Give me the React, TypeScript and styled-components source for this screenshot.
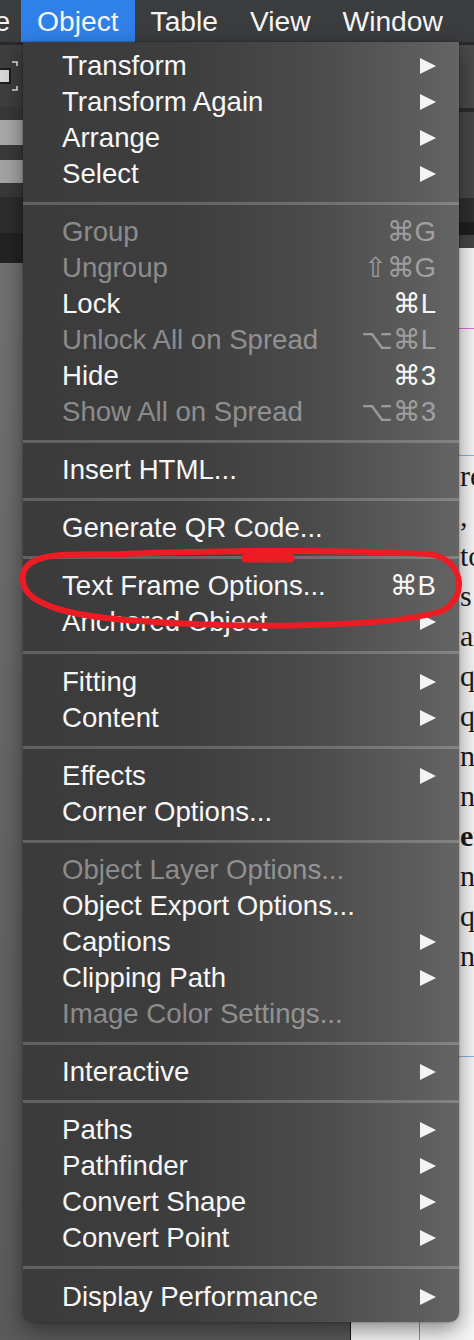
import styled, { createGlobalStyle } from 'styled-components';

type Item = {
  label: string;
  shortcut?: string;
  submenu?: boolean;
  disabled?: boolean;
};

type Section = { items: Item[]; gap?: number };

const sections: Section[] = [
  {
    items: [
      { label: 'Transform', submenu: true },
      { label: 'Transform Again', submenu: true },
      { label: 'Arrange', submenu: true },
      { label: 'Select', submenu: true },
    ],
  },
  {
    gap: 22,
    items: [
      { label: 'Group', shortcut: '⌘G', disabled: true },
      { label: 'Ungroup', shortcut: '⇧⌘G', disabled: true },
      { label: 'Lock', shortcut: '⌘L' },
      { label: 'Unlock All on Spread', shortcut: '⌥⌘L', disabled: true },
      { label: 'Hide', shortcut: '⌘3' },
      { label: 'Show All on Spread', shortcut: '⌥⌘3', disabled: true },
    ],
  },
  { gap: 22, items: [{ label: 'Insert HTML...' }] },
  { gap: 22, items: [{ label: 'Generate QR Code...' }] },
  {
    gap: 22,
    items: [
      { label: 'Text Frame Options...', shortcut: '⌘B' },
      { label: 'Anchored Object', submenu: true },
    ],
  },
  {
    gap: 24,
    items: [
      { label: 'Fitting', submenu: true },
      { label: 'Content', submenu: true },
    ],
  },
  {
    gap: 22,
    items: [
      { label: 'Effects', submenu: true },
      { label: 'Corner Options...' },
    ],
  },
  {
    gap: 22,
    items: [
      { label: 'Object Layer Options...', disabled: true },
      { label: 'Object Export Options...' },
      { label: 'Captions', submenu: true },
      { label: 'Clipping Path', submenu: true },
      { label: 'Image Color Settings...', disabled: true },
    ],
  },
  { gap: 22, items: [{ label: 'Interactive', submenu: true }] },
  {
    gap: 22,
    items: [
      { label: 'Paths', submenu: true },
      { label: 'Pathfinder', submenu: true },
      { label: 'Convert Shape', submenu: true },
      { label: 'Convert Point', submenu: true },
    ],
  },
  { gap: 23, items: [{ label: 'Display Performance', submenu: true }] },
];

const titles = ['Object', 'Table', 'View', 'Window'];

// bars of the control panel peeking out at each side of the menu
const leftBars = [
  { h: 3, c: '#2a2a2a' },
  { h: 62, c: '#3e3e3e', icon: true },
  { h: 13, c: '#383838' },
  { h: 25, c: '#a8a8a8' },
  { h: 15, c: '#3a3a3a' },
  { h: 23, c: '#a4a4a4' },
  { h: 14, c: '#393939' },
  { h: 36, c: '#2d2d2d' },
  { h: 15, c: '#232323' },
];

const rightBars = [
  { h: 3, c: '#2a2a2a' },
  { h: 63, c: '#4a4a4a' },
  { h: 4, c: '#2c2c2c' },
  { h: 86, c: '#484848' },
  { h: 24, c: '#2f2f2f' },
  { h: 13, c: '#1f1f1f' },
  { h: 13, c: '#454545' },
];

const pageLines = ['rest', ', a', 'to', 's m', 'ar', 'qu', 'q', 'ne', 'n a', 'et', 'ns', 'q', 'ns'];

const App = () => {
  return (
    <Screen>
      <GlobalStyle />
      <MenuBar>
        <Titles>
          <CutTitle>Type</CutTitle>
          {titles.map((t) => (
            <Title key={t} $active={t === 'Object'}>
              {t}
            </Title>
          ))}
        </Titles>
      </MenuBar>

      <ControlPanel>
        <BarStack>
          {leftBars.map((b, i) => (
            <Bar key={i} $h={b.h} $c={b.c}>
              {b.icon && <FrameIcon />}
            </Bar>
          ))}
        </BarStack>
        <PanelMiddle />
        <BarStack>
          {rightBars.map((b, i) => (
            <Bar key={i} $h={b.h} $c={b.c} />
          ))}
        </BarStack>
      </ControlPanel>

      <Canvas>
        <Pasteboard>
          <Ruler />
        </Pasteboard>
        <Page>
          <Margins>
            <TextFrame>
              {pageLines.map((l, i) => (
                <PageLine key={i} $bold={l === 'et'}>
                  {l}
                </PageLine>
              ))}
            </TextFrame>
          </Margins>
        </Page>
      </Canvas>

      <Dropdown>
        {sections.map((s, si) => (
          <div key={si}>
            {s.gap && <Separator $h={s.gap} />}
            {s.items.map((it) => (
              <Row key={it.label} $disabled={it.disabled}>
                <Label>{it.label}</Label>
                {it.shortcut && <Shortcut>{it.shortcut}</Shortcut>}
                {it.submenu && <SubArrow />}
              </Row>
            ))}
          </div>
        ))}
      </Dropdown>

      <Annotation viewBox="0 0 474 1340" width="474" height="1340">
        <path
          d="M 120 554 C 210 551, 330 549, 428 554 C 462 557, 470 596, 442 611 C 392 627, 250 629, 140 621 C 80 617, 32 608, 24 586 C 19 569, 28 557, 62 555 C 80 554, 98 554, 130 554"
          fill="none"
          stroke="#ec1c24"
          strokeWidth="6"
          strokeLinecap="round"
          strokeLinejoin="round"
        />
        <path d="M 246 558 L 290 558" stroke="#ec1c24" strokeWidth="9" strokeLinecap="round" />
      </Annotation>
    </Screen>
  );
};

const FrameIcon = () => (
  <svg width="20" height="34" viewBox="0 0 20 34">
    <rect x="-4" y="10" width="14" height="14" fill="#d8d8d8" stroke="#1c1c1c" strokeWidth="2" />
    <path d="M 12 3 H 17 V 7 M 12 31 H 17 V 27" fill="none" stroke="#e6e6e6" strokeWidth="1.6" />
  </svg>
);

const SubArrow = () => (
  <ArrowSvg width="16" height="16" viewBox="0 0 16 16">
    <polygon points="0,0 16,8 0,16" fill="#f4f4f4" />
  </ArrowSvg>
);

const GlobalStyle = createGlobalStyle`
  html, body {
    margin: 0;
    padding: 0;
    background: #5a5a5a;
  }
  body {
    width: 474px;
    height: 1340px;
    overflow: hidden;
  }
`;

const Screen = styled.div`
  position: relative;
  display: flex;
  flex-direction: column;
  width: 474px;
  height: 1340px;
  overflow: hidden;
  font-family: 'Liberation Sans', 'DejaVu Sans', Arial, sans-serif;
`;

const MenuBar = styled.div`
  height: 42px;
  flex-shrink: 0;
  background: #3b3c3e;
  overflow: hidden;
`;

const Titles = styled.div`
  display: flex;
  margin-left: -67px;
`;

const Title = styled.span<{ $active?: boolean }>`
  flex-shrink: 0;
  padding: 0 16px;
  height: 42px;
  line-height: 42px;
  font-size: 28.2px;
  color: #f6f6f6;
  white-space: nowrap;
  background: ${({ $active }) => ($active ? '#2f81e9' : 'transparent')};
`;

// "Type", mostly hidden behind the left edge of the window
const CutTitle = styled(Title)`
  padding: 0 11px 0 16px;
`;

const ControlPanel = styled.div`
  display: grid;
  grid-template-columns: 23px 1fr 15px;
  height: 206px;
  flex-shrink: 0;
`;

const BarStack = styled.div`
  display: flex;
  flex-direction: column;
`;

const Bar = styled.div<{ $h: number; $c: string }>`
  display: flex;
  align-items: center;
  height: ${({ $h }) => $h}px;
  background: ${({ $c }) => $c};
`;

const PanelMiddle = styled.div`
  background: #3c3c3c;
`;

const Canvas = styled.div`
  display: flex;
  flex: 1;
  min-height: 0;
`;

const Pasteboard = styled.div`
  flex: 0 0 350px;
  background: linear-gradient(180deg, #717171 0%, #646464 50%, #5a5a5a 100%);
`;

const Ruler = styled.div`
  height: 15px;
  background: #232323;
`;

const Page = styled.div`
  flex: 1;
  min-width: 0;
  overflow: hidden;
  background: #f7f7f7;
  border-left: 1px solid #111;
`;

const Margins = styled.div`
  height: 100%;
  margin: 80px 0 0 68px;
  border-top: 1px solid #e070d8;
  border-left: 1px solid #a27ce6;
`;

const TextFrame = styled.div`
  display: flex;
  flex-direction: column;
  height: 600px;
  margin-top: 126px;
  padding-left: 40px;
  border-top: 1px solid #8fb0dc;
  border-bottom: 1px solid #8fb0dc;
`;

const PageLine = styled.div<{ $bold?: boolean }>`
  height: 40px;
  line-height: 40px;
  font-family: 'Liberation Serif', 'DejaVu Serif', serif;
  font-size: 30px;
  font-weight: ${({ $bold }) => ($bold ? 700 : 400)};
  color: #1b1b1b;
  white-space: nowrap;
`;

const Dropdown = styled.div`
  position: absolute;
  top: 42px;
  left: 23px;
  width: 436px;
  padding: 6px 0 7px;
  border-radius: 0 0 9px 9px;
  background: linear-gradient(90deg, #3b3b3c 0%, #3d3d3e 35%, #4a4a4b 65%, #5c5c5c 90%, #646464 100%);
  box-shadow: 0 8px 22px rgba(0, 0, 0, 0.45), 0 0 2px rgba(0, 0, 0, 0.5);
`;

const Separator = styled.div<{ $h: number }>`
  display: flex;
  align-items: center;
  height: ${({ $h }) => $h}px;

  &::after {
    content: '';
    width: 100%;
    height: 3px;
    background: rgba(255, 255, 255, 0.2);
  }
`;

const Row = styled.div<{ $disabled?: boolean }>`
  display: flex;
  align-items: center;
  height: 36px;
  padding: 0 23px 0 39px;
  font-size: 27.6px;
  line-height: 36px;
  color: ${({ $disabled }) => ($disabled ? 'rgba(255, 255, 255, 0.42)' : '#f7f7f7')};
`;

const Label = styled.span`
  flex: 1;
  white-space: nowrap;
`;

const Shortcut = styled.span`
  white-space: nowrap;
`;

const ArrowSvg = styled.svg`
  flex-shrink: 0;
`;

const Annotation = styled.svg`
  position: absolute;
  top: 0;
  left: 0;
  pointer-events: none;
`;

export default App;
